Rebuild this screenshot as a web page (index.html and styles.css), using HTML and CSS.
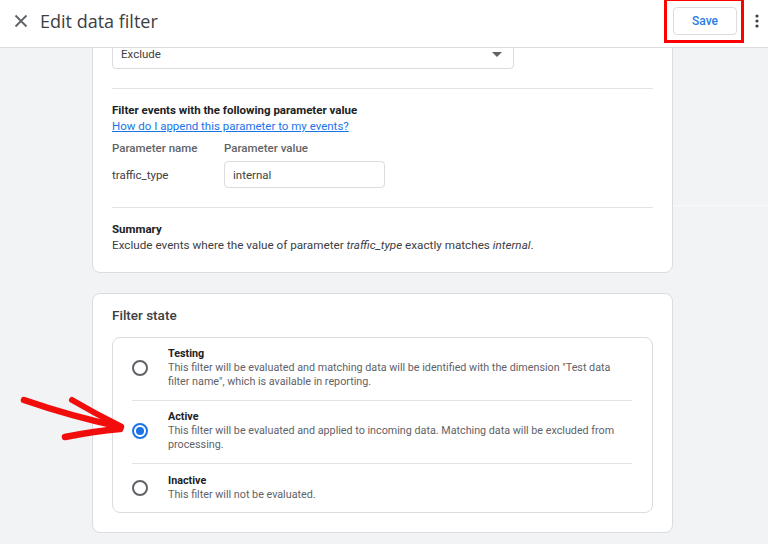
FILE: index.html
```html
<!DOCTYPE html>
<html lang="en">
<head>
<meta charset="utf-8">
<title>Edit data filter</title>
<link rel="stylesheet" href="styles.css">
</head>
<body>
<header class="topbar">
  <button class="icon-btn close-btn" aria-label="Close">
    <svg width="14" height="14" viewBox="0 0 14 14"><path d="M1.5 1.5 L12.5 12.5 M12.5 1.5 L1.5 12.5" stroke="#5f6368" stroke-width="1.8" fill="none"/></svg>
  </button>
  <h1 class="title">Edit data filter</h1>
  <div class="spacer"></div>
  <div class="save-wrap">
    <button class="save-btn">Save</button>
    <span class="highlight"></span>
  </div>
  <button class="icon-btn more-btn" aria-label="More">
    <svg width="4" height="14" viewBox="0 0 4 14"><circle cx="2" cy="2" r="1.6" fill="#3c4043"/><circle cx="2" cy="7" r="1.6" fill="#3c4043"/><circle cx="2" cy="12" r="1.6" fill="#3c4043"/></svg>
  </button>
</header>

<main class="content">
  <section class="card card-filter">
    <div class="select">
      <span>Exclude</span>
      <span class="caret"></span>
    </div>
    <hr class="divider">
    <div class="block">
      <div class="strong">Filter events with the following parameter value</div>
      <a class="link" href="#">How do I append this parameter to my events?</a>
    </div>
    <div class="param-grid">
      <div class="label">Parameter name</div>
      <div class="label">Parameter value</div>
      <div class="param-name">traffic_type</div>
      <div class="input">internal</div>
    </div>
    <hr class="divider">
    <div class="block summary">
      <div class="strong">Summary</div>
      <div class="text">Exclude events where the value of parameter <em>traffic_type</em> exactly matches <em>internal</em>.</div>
    </div>
  </section>

  <section class="card card-state">
    <h2 class="card-title">Filter state</h2>
    <div class="options">
      <div class="option">
        <span class="radio"></span>
        <div class="opt-text">
          <div class="opt-title">Testing</div>
          <div class="opt-desc">This filter will be evaluated and matching data will be identified with the dimension "Test data filter name", which is available in reporting.</div>
        </div>
      </div>
      <div class="option">
        <span class="radio checked"></span>
        <div class="opt-text">
          <div class="opt-title">Active</div>
          <div class="opt-desc">This filter will be evaluated and applied to incoming data. Matching data will be excluded from processing.</div>
        </div>
      </div>
      <div class="option">
        <span class="radio"></span>
        <div class="opt-text">
          <div class="opt-title">Inactive</div>
          <div class="opt-desc">This filter will not be evaluated.</div>
        </div>
      </div>
    </div>
  </section>
</main>

<svg class="annotation-arrow" width="140" height="60" viewBox="0 390 140 60" aria-hidden="true">
  <g stroke="#f20d0d" stroke-linecap="round" fill="none">
    <path d="M24 400 Q70 416 121 427" stroke-width="6.5"/>
    <path d="M72 400 Q96 414 120 426" stroke-width="6"/>
    <path d="M65 437 Q95 431 120 429" stroke-width="6.5"/>
  </g>
</svg>
</body>
</html>
```

FILE: styles.css
```css
* { box-sizing: border-box; }

html, body {
  margin: 0;
  height: 100%;
}

body {
  background: #f1f3f4;
  font-family: Roboto, "Liberation Sans", Arial, sans-serif;
  color: #3c4043;
  display: flex;
  flex-direction: column;
  overflow: hidden;
  position: relative;
}

.topbar {
  flex: 0 0 auto;
  height: 48px;
  background: #fff;
  border-bottom: 1px solid #dadce0;
  display: flex;
  align-items: center;
  padding: 0 9px 0 14px;
  position: relative;
  z-index: 2;
}

.icon-btn {
  background: none;
  border: 0;
  padding: 0;
  display: flex;
  align-items: center;
  justify-content: center;
  cursor: pointer;
}

.close-btn {
  width: 14px;
  height: 14px;
  margin-top: -5px;
}

.title {
  margin: -5px 0 0 12px;
  font-family: "Open Sans", Roboto, sans-serif;
  font-size: 18px;
  font-weight: 400;
  color: #3c4043;
  letter-spacing: 0;
}

.spacer { flex: 1; }

.save-wrap {
  position: relative;
  margin-top: -5px;
}

.save-btn {
  width: 64px;
  height: 28px;
  background: #fff;
  border: 1px solid #dadce0;
  border-radius: 4px;
  color: #2b7de9;
  font-family: Roboto, sans-serif;
  font-size: 12px;
  font-weight: 500;
  display: block;
}

.highlight {
  position: absolute;
  left: -9px;
  top: -9px;
  width: 80px;
  height: 45px;
  border: 3px solid #f00;
}

.more-btn {
  width: 4px;
  height: 14px;
  margin: -5px 0 0 18px;
}

.content {
  flex: 1;
  overflow: hidden;
  padding-left: 92px;
  background-image: linear-gradient(#fafafa, #fafafa);
  background-repeat: no-repeat;
  background-size: 95px 1px;
  background-position: 673px 157px;
}

.card {
  width: 581px;
  background: #fff;
  border: 1px solid #dadce0;
  border-radius: 8px;
  padding: 0 19px;
}

.card-filter {
  margin-top: -30px;
  padding-top: 20px;
  padding-bottom: 19px;
}

.select {
  width: 402px;
  height: 30px;
  border: 1px solid #dadce0;
  border-radius: 4px;
  display: flex;
  align-items: center;
  justify-content: space-between;
  padding: 0 11px 0 8px;
  font-size: 11.5px;
  color: #3c4043;
}

.caret {
  width: 0;
  height: 0;
  border-left: 5px solid transparent;
  border-right: 5px solid transparent;
  border-top: 5px solid #5f6368;
}

.divider {
  border: 0;
  border-top: 1px solid #e3e3e3;
  margin: 19px 0 0;
}

.block {
  margin-top: 13px;
  font-size: 11.5px;
  line-height: 16px;
}

.strong {
  font-weight: 700;
  color: #202124;
}

.link {
  color: #1a73e8;
  text-decoration: underline;
}

.param-grid {
  display: grid;
  grid-template-columns: 112px 161px;
  grid-template-rows: 16px 27px;
  row-gap: 5px;
  margin-top: 6px;
  font-size: 11.5px;
  align-items: center;
}

.label {
  color: #5f6368;
  font-weight: 500;
}

.param-name { color: #3c4043; }

.input {
  height: 27px;
  border: 1px solid #dadce0;
  border-radius: 4px;
  padding-left: 8px;
  display: flex;
  align-items: center;
  color: #3c4043;
}

.summary { margin-top: 13px; }

.summary .text { color: #3c4043; font-size: 11.7px; }

.card-state {
  margin-top: 20px;
  padding-top: 11px;
  padding-bottom: 19px;
}

.card-title {
  margin: 0;
  font-size: 13.5px;
  font-weight: 500;
  line-height: 20px;
  color: #3c4043;
}

.options {
  margin-top: 12px;
  border: 1px solid #dadce0;
  border-radius: 8px;
}

.option {
  display: flex;
  align-items: center;
  margin: 0 20px 0 19px;
  padding: 9px 0 11px;
  border-bottom: 1px solid #e3e3e3;
}

.option:last-child { border-bottom: 0; padding-top: 10px; padding-bottom: 10px; }

.radio {
  flex: 0 0 auto;
  width: 16px;
  height: 16px;
  border: 2px solid #5f6368;
  border-radius: 50%;
  margin-right: 20px;
  position: relative;
}

.radio.checked {
  border-color: #1a73e8;
}

.radio.checked::after {
  content: "";
  position: absolute;
  left: 2px;
  top: 2px;
  width: 8px;
  height: 8px;
  border-radius: 50%;
  background: #1a73e8;
}

.opt-text {
  font-size: 10.75px;
  line-height: 14px;
}

.opt-title {
  font-weight: 700;
  color: #202124;
}

.opt-desc { color: #5f6368; }

.annotation-arrow {
  position: absolute;
  left: 0;
  top: 390px;
  z-index: 3;
  pointer-events: none;
}
```
